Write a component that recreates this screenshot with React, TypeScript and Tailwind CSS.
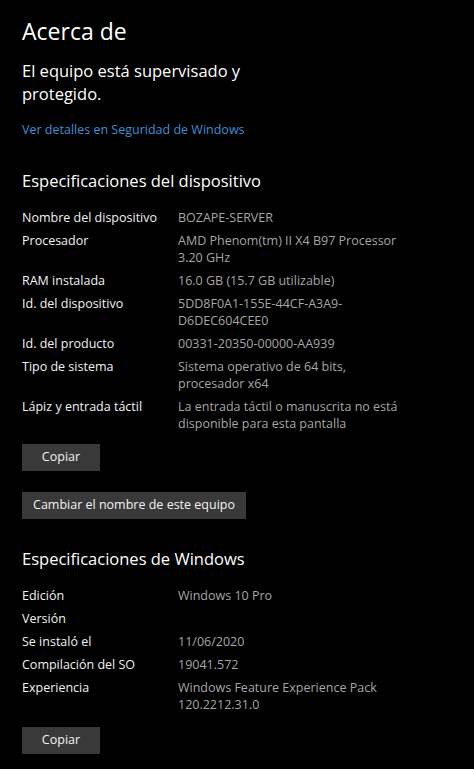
import React from "react";

type Row = { label: string; value: string[] };

const device: Row[] = [
  { label: "Nombre del dispositivo", value: ["BOZAPE-SERVER"] },
  { label: "Procesador", value: ["AMD Phenom(tm) II X4 B97 Processor", "3.20 GHz"] },
  { label: "RAM instalada", value: ["16.0 GB (15.7 GB utilizable)"] },
  { label: "Id. del dispositivo", value: ["5DD8F0A1-155E-44CF-A3A9-", "D6DEC604CEE0"] },
  { label: "Id. del producto", value: ["00331-20350-00000-AA939"] },
  { label: "Tipo de sistema", value: ["Sistema operativo de 64 bits,", "procesador x64"] },
  {
    label: "Lápiz y entrada táctil",
    value: ["La entrada táctil o manuscrita no está", "disponible para esta pantalla"],
  },
];

const windows: Row[] = [
  { label: "Edición", value: ["Windows 10 Pro"] },
  { label: "Versión", value: [] },
  { label: "Se instaló el", value: ["11/06/2020"] },
  { label: "Compilación del SO", value: ["19041.572"] },
  { label: "Experiencia", value: ["Windows Feature Experience Pack", "120.2212.31.0"] },
];

function Rows({ rows }: { rows: Row[] }) {
  return (
    <div className="flex flex-col gap-[6px] text-[12.5px] leading-[17px]">
      {rows.map((r) => (
        <div key={r.label} className="flex">
          <div className="w-[156px] shrink-0 text-[#f2f2f2]">{r.label}</div>
          <div className="text-[#a6a6a6]">
            {r.value.length === 0 ? <div>&nbsp;</div> : r.value.map((v) => <div key={v}>{v}</div>)}
          </div>
        </div>
      ))}
    </div>
  );
}

function Btn({ children, w }: { children: React.ReactNode; w: string }) {
  return (
    <div
      className={`${w} h-[27px] bg-[#393939] text-[#f2f2f2] text-[12.5px] flex items-center justify-center`}
    >
      {children}
    </div>
  );
}

export default function App() {
  return (
    <div
      className="w-[474px] h-[769px] bg-black text-white pl-[22px] pt-[15px] overflow-hidden"
      style={{ fontFamily: '"Open Sans", "Noto Sans", sans-serif' }}
    >
      <div className="text-[23px] leading-[32px] text-white">Acerca de</div>
      <div className="mt-[12px] text-[16.5px] leading-[23px] text-white">
        El equipo está supervisado y<br />protegido.
      </div>
      <div className="mt-[16px] text-[12.5px] leading-[17px] text-[#3f8fd9]">
        Ver detalles en Seguridad de Windows
      </div>
      <div className="mt-[31px] text-[16.5px] leading-[24px] text-white">
        Especificaciones del dispositivo
      </div>
      <div className="mt-[16px]">
        <Rows rows={device} />
      </div>
      <div className="mt-[12px]">
        <Btn w="w-[78px]">Copiar</Btn>
      </div>
      <div className="mt-[21px]">
        <Btn w="w-[224px]">Cambiar el nombre de este equipo</Btn>
      </div>
      <div className="mt-[28px] text-[16.5px] leading-[24px] text-white">
        Especificaciones de Windows
      </div>
      <div className="mt-[16px]">
        <Rows rows={windows} />
      </div>
      <div className="mt-[14px]">
        <Btn w="w-[78px]">Copiar</Btn>
      </div>
    </div>
  );
}
